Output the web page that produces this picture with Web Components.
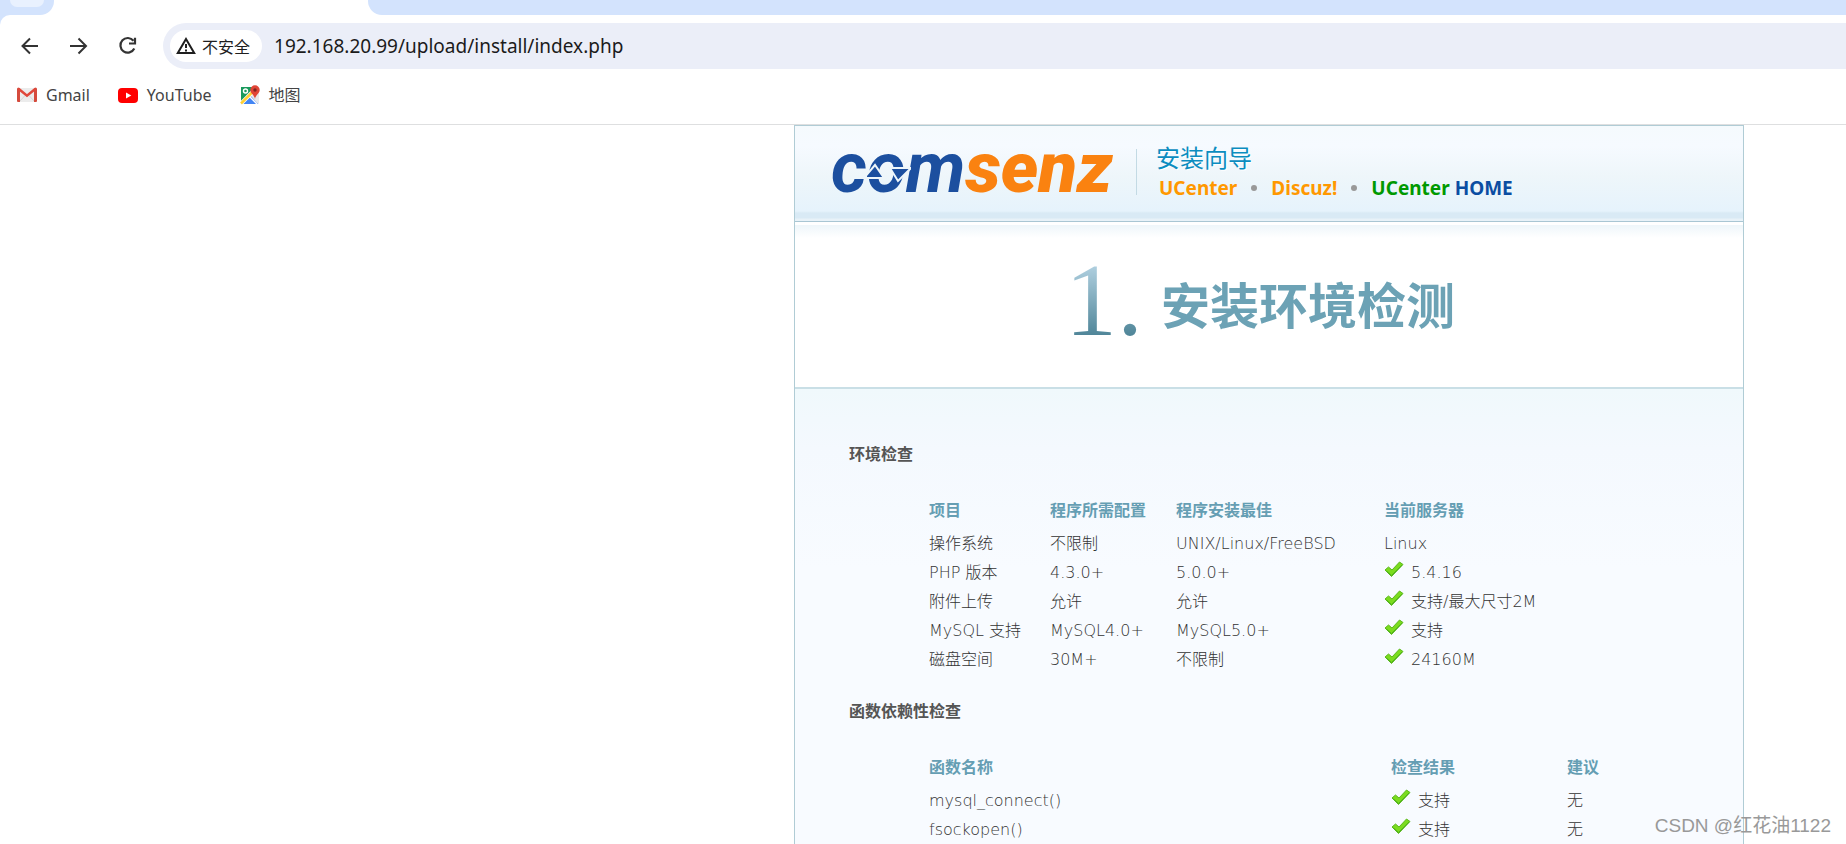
<!DOCTYPE html>
<html lang="zh-CN">
<head>
<meta charset="utf-8">
<title>Comsenz 安装向导</title>
<style>
  body {
    margin: 0;
    min-height: 100vh;
    display: flex;
    flex-direction: column;
    background: #fff;
    font-family: "Noto Sans", "Noto Sans CJK SC", sans-serif;
  }
  install-page {
    flex: 1;
  }
</style>
</head>
<body>
<browser-tabs></browser-tabs>
<browser-toolbar url="192.168.20.99/upload/install/index.php">不安全</browser-toolbar>
<bookmark-bar>
  <bookmark-item icon="gmail">Gmail</bookmark-item>
  <bookmark-item icon="youtube">YouTube</bookmark-item>
  <bookmark-item icon="maps">地图</bookmark-item>
</bookmark-bar>
<install-page>
  <install-header slot="header">安装向导</install-header>
  <step-title slot="title" step="1.">安装环境检测</step-title>
  <check-section id="env" heading="环境检查"></check-section>
  <check-section id="func" heading="函数依赖性检查"></check-section>
</install-page>
<water-mark>CSDN @红花油1122</water-mark>

<script>
class BrowserTabs extends HTMLElement {
  constructor() {
    super();
    this.attachShadow({ mode: 'open' });
    this.shadowRoot.innerHTML = `
      <style>
        :host {
          display: flex;
          flex-shrink: 0;
          height: 15px;
          background: #fff;
        }
        .left {
          width: 54px;
          background: #d3e3fd;
          border-radius: 0 0 14px 0;
          display: flex;
          justify-content: center;
        }
        .search {
          width: 34px;
          height: 7px;
          background: #e9f1fe;
          border-radius: 0 0 16px 16px;
        }
        .tab {
          width: 314px;
        }
        .rest {
          flex: 1;
          background: #d3e3fd;
          border-radius: 0 0 0 14px;
        }
      </style>
      <div class="left"><div class="search"></div></div>
      <div class="tab"></div>
      <div class="rest"></div>
    `;
  }
}

class BrowserToolbar extends HTMLElement {
  constructor() {
    super();
    this.attachShadow({ mode: 'open' });
    const url = this.getAttribute('url') || '';
    this.shadowRoot.innerHTML = `
      <style>
        :host {
          display: block;
          background: #d3e3fd;
        }
        .bar {
          display: flex;
          align-items: center;
          padding: 8px 0 0 18px;
          background: #fff;
          border-radius: 10px 0 0 0;
        }
        button {
          width: 24px;
          height: 24px;
          padding: 0;
          margin-right: 25px;
          border: none;
          background: none;
          cursor: pointer;
        }
        button:nth-of-type(3) {
          margin-right: 23px;
        }
        svg {
          display: block;
        }
        .address {
          flex: 1;
          display: flex;
          align-items: center;
          height: 46px;
          padding-left: 7px;
          background: #ebeef8;
          border-radius: 23px 0 0 23px;
        }
        .chip {
          display: flex;
          align-items: center;
          gap: 6px;
          height: 32px;
          padding: 0 12px 0 6px;
          background: #fff;
          border-radius: 16px;
          font-size: 16px;
          color: #1f1f1f;
        }
        input {
          flex: 1;
          padding: 0 12px;
          border: none;
          outline: none;
          background: none;
          font-family: "Noto Sans", sans-serif;
          font-size: 19px;
          color: #1b1b1b;
        }
      </style>
      <div class="bar">
        <button aria-label="Back"><svg width="24" height="24" fill="none" stroke="#333" stroke-width="2"><path d="M20 12H5M12 4.500L4.500 12L12 19.500"/></svg></button>
        <button aria-label="Forward"><svg width="24" height="24" fill="none" stroke="#333" stroke-width="2"><path d="M3 12H18.500M11.500 4.500L19 12L11.500 19.500"/></svg></button>
        <button aria-label="Reload"><svg width="24" height="24" fill="none" stroke="#333" stroke-width="2.200"><path d="M17.500 6.800A7.300 7.300 0 1 0 18.300 14.500M19 3.800V9.500H13"/></svg></button>
        <div class="address">
          <div class="chip">
            <svg width="20" height="18" viewBox="0 0 20 18"><path d="M10 2L18.200 16H1.800Z" fill="none" stroke="#1f1f1f" stroke-width="2"/><path d="M10 7V11M10 12.500V14.500" stroke="#1f1f1f" stroke-width="2"/></svg>
            <span><slot></slot></span>
          </div>
          <input type="text" aria-label="Address" value="${url}">
        </div>
      </div>
    `;
  }
}

class BookmarkBar extends HTMLElement {
  constructor() {
    super();
    this.attachShadow({ mode: 'open' });
    this.shadowRoot.innerHTML = `
      <style>
        :host {
          display: flex;
          flex-shrink: 0;
          align-items: center;
          gap: 28px;
          height: 52px;
          padding: 0 17px 3px;
          border-bottom: 1px solid #dedfe0;
          background: #fff;
        }
      </style>
      <slot></slot>
    `;
  }
}

const BOOKMARK_ICONS = {
  gmail: `
    <rect x="1" y="3" width="18" height="14" rx="1" fill="#ececec"/>
    <path d="M3 16L8 10.500M17 16L12 10.500" stroke="#d5d5d5"/>
    <path d="M0 4Q0 2.500 1.500 2.500L3 3.500V17H1Q0 17 0 16ZM20 4Q20 2.500 18.500 2.500L17 3.500V17H19Q20 17 20 16Z" fill="#d54b3d"/>
    <path d="M1.500 3.800L10 10.700L18.500 3.800" fill="none" stroke="#e0483b" stroke-width="2.600"/>`,
  youtube: `
    <rect x="0" y="3" width="20" height="15" rx="4" fill="#f00"/>
    <path d="M8 7.500V13.500L13.300 10.500Z" fill="#fff"/>`,
  maps: `
    <rect x="1" y="2" width="18" height="17" rx="1" fill="#e8e8e8"/>
    <path d="M1 2H12L14 7L1 19Z" fill="#1a9a5c"/>
    <path d="M1 19L10 10L18 19Z" fill="#4285f4"/>
    <path d="M1 18.500L14 5.500" stroke="#fff" stroke-width="4"/>
    <path d="M1 18.500L14 5.500" stroke="#ffcf32" stroke-width="2.500"/>
    <path d="M10 12L17 19" stroke="#fff" stroke-width="1.500"/>
    <circle cx="5.500" cy="6" r="2" fill="none" stroke="#fff" stroke-width="1.400"/>
    <path d="M15 14C14.500 10 10.300 8.500 10.300 5A4.700 4.700 0 0 1 19.700 5C19.700 8.500 15.500 10 15 14Z" fill="#e04536"/>
    <circle cx="15" cy="5" r="1.700" fill="#7d251f"/>`
};

class BookmarkItem extends HTMLElement {
  constructor() {
    super();
    this.attachShadow({ mode: 'open' });
    const icon = BOOKMARK_ICONS[this.getAttribute('icon')] || '';
    this.shadowRoot.innerHTML = `
      <style>
        :host {
          display: block;
        }
        a {
          display: flex;
          align-items: center;
          gap: 9px;
          font-size: 16px;
          line-height: 24px;
          color: #444;
          text-decoration: none;
        }
      </style>
      <a href="#"><svg width="20" height="20" viewBox="0 0 20 20">${icon}</svg><slot></slot></a>
    `;
  }
}

class InstallPage extends HTMLElement {
  constructor() {
    super();
    this.attachShadow({ mode: 'open' });
    this.shadowRoot.innerHTML = `
      <style>
        :host {
          display: flex;
          justify-content: flex-end;
          padding-right: 102px;
        }
        main {
          box-sizing: border-box;
          width: 950px;
          border: 1px solid #b0ccd5;
          border-bottom: none;
          background: #f8fbff;
        }
        .body {
          display: flex;
          flex-direction: column;
          gap: 26px;
          padding: 54px 54px 0;
          background: linear-gradient(#f0f9fc, #f4f9fe 60px, #f8fbff 180px);
        }
      </style>
      <main>
        <slot name="header"></slot>
        <slot name="title"></slot>
        <div class="body"><slot></slot></div>
      </main>
    `;
  }
}

class InstallHeader extends HTMLElement {
  constructor() {
    super();
    this.attachShadow({ mode: 'open' });
    this.shadowRoot.innerHTML = `
      <style>
        :host {
          display: flex;
          align-items: center;
          box-sizing: border-box;
          height: 96px;
          padding: 0 36px 4px;
          border-bottom: 1px solid #a9c6d3;
          background: linear-gradient(#f5fafd, #f6faff 20px, #eef6fa 50px, #e6f3fc 85px, #d9eaf5 87px, #d9eaf5 92px, #e8f2f8 93px);
        }
        .logo {
          display: flex;
          width: 305px;
          height: 46px;
          align-items: flex-end;
          font: italic bold 71px/54px Roboto, sans-serif;
          color: #1c4f9f;
          border-right: 1px solid #c3dae4;
        }
        .logo b {
          color: #fa8210;
        }
        .o {
          position: relative;
        }
        .o svg {
          position: absolute;
          left: 0;
          top: 12px;
        }
        .names {
          padding-left: 19px;
        }
        h1 {
          margin: 0;
          font-size: 24px;
          line-height: 32px;
          font-weight: 400;
          color: #0b8dc0;
          text-shadow: 1px 1px 1px #fff;
        }
        ul {
          display: flex;
          align-items: center;
          gap: 14px;
          margin: 0;
          padding: 0 0 0 3px;
          list-style: none;
          font: bold 19px/28px "Noto Sans", sans-serif;
          color: #ff9800;
        }
        .dot {
          width: 6px;
          height: 6px;
          border-radius: 3px;
          background: #999;
        }
        .green {
          color: #090;
        }
        .blue {
          color: #0b4da2;
        }
      </style>
      <div class="logo"><span>c</span><span class="o">o<svg width="44" height="40" viewBox="0 0 44 40">
        <path d="M-3 25L8 12L17 25Z" fill="#1c4f9f" stroke="#eef6fa" stroke-width="2"/>
        <path d="M23 15H44L31 28Z" fill="#1c4f9f" stroke="#eef6fa" stroke-width="2"/>
      </svg></span><span>m</span><b>senz</b></div>
      <div class="names">
        <h1><slot></slot></h1>
        <ul>
          <li>UCenter</li>
          <li class="dot"></li>
          <li>Discuz!</li>
          <li class="dot"></li>
          <li class="green">UCenter <span class="blue">HOME</span></li>
        </ul>
      </div>
    `;
  }
}

class StepTitle extends HTMLElement {
  constructor() {
    super();
    this.attachShadow({ mode: 'open' });
    const step = this.getAttribute('step') || '';
    this.shadowRoot.innerHTML = `
      <style>
        :host {
          display: flex;
          justify-content: center;
          align-items: center;
          gap: 18px;
          box-sizing: border-box;
          height: 167px;
          padding-right: 18px;
          border-bottom: 2px solid #c9dfe6;
          background: linear-gradient(#fff 3px, #eef6fa 3px, #fff 16px);
        }
        .step {
          padding-bottom: 10px;
          font: 104px/120px "Liberation Serif", serif;
          background: linear-gradient(#b0d0e0 25px, #4f8598 96px);
          -webkit-background-clip: text;
          background-clip: text;
          color: transparent;
        }
        h2 {
          margin: 0;
          font-size: 49px;
          line-height: 60px;
          font-weight: 700;
          color: #6ca2b5;
        }
      </style>
      <span class="step">${step}</span>
      <h2><slot></slot></h2>
    `;
  }
}

class CheckSection extends HTMLElement {
  constructor() {
    super();
    this.attachShadow({ mode: 'open' });
  }

  // data: { columns: [{ name, width }], rows: [[text, ...]] }, a leading "+" marks a passed check
  set data(data) {
    const cols = data.columns.map((c) => `<col${c.width ? ` style="width: ${c.width}px"` : ''}>`).join('');
    const head = data.columns.map((c) => `<th scope="col">${c.name}</th>`).join('');
    const cell = (text) => text.startsWith('+') ? `<td><pass-mark></pass-mark>${text.slice(1)}</td>` : `<td>${text}</td>`;
    const rows = data.rows.map((row) => `<tr>${row.map(cell).join('')}</tr>`).join('');

    this.shadowRoot.innerHTML = `
      <style>
        :host {
          display: block;
          font-family: "DejaVu Sans", "Noto Sans CJK SC", sans-serif;
          font-size: 16px;
          color: #555;
        }
        h3 {
          margin: 0 0 26px;
          font-size: 16px;
          line-height: 24px;
        }
        .table {
          padding-left: 80px;
        }
        table {
          width: 100%;
          table-layout: fixed;
          border-collapse: collapse;
        }
        th, td {
          height: 29px;
          padding: 0;
          line-height: 24px;
          text-align: left;
          white-space: nowrap;
        }
        th {
          height: 36px;
          color: #659eb3;
        }
        td {
          font-weight: 200;
          color: #333;
        }
      </style>
      <h3>${this.getAttribute('heading')}</h3>
      <div class="table">
        <table>
          <colgroup>${cols}</colgroup>
          <thead><tr>${head}</tr></thead>
          <tbody>${rows}</tbody>
        </table>
      </div>
    `;
  }
}

class PassMark extends HTMLElement {
  constructor() {
    super();
    this.attachShadow({ mode: 'open' });
    this.shadowRoot.innerHTML = `
      <style>
        :host {
          display: inline-block;
          width: 20px;
          height: 17px;
          margin-right: 7px;
        }
      </style>
      <svg width="20" height="17" viewBox="0 0 20 17">
        <path d="M1 9L4.500 6L8 9L15.500 1L19 3.500L7.500 15.500Z" fill="#7bdc1e" stroke="#5cb81e"/>
        <path d="M2.500 10L7.500 14.500L18 4" fill="none" stroke="#4cb01c"/>
      </svg>
    `;
  }
}

class WaterMark extends HTMLElement {
  constructor() {
    super();
    this.attachShadow({ mode: 'open' });
    this.shadowRoot.innerHTML = `
      <style>
        :host {
          position: absolute;
          right: 15px;
          bottom: 6px;
          font: 19px/24px "Liberation Sans", "Noto Sans CJK SC", sans-serif;
          color: #999;
        }
      </style>
      <slot></slot>
    `;
  }
}

customElements.define('browser-tabs', BrowserTabs);
customElements.define('browser-toolbar', BrowserToolbar);
customElements.define('bookmark-bar', BookmarkBar);
customElements.define('bookmark-item', BookmarkItem);
customElements.define('install-page', InstallPage);
customElements.define('install-header', InstallHeader);
customElements.define('step-title', StepTitle);
customElements.define('check-section', CheckSection);
customElements.define('pass-mark', PassMark);
customElements.define('water-mark', WaterMark);

document.getElementById('env').data = {
  columns: [
    { name: '项目', width: 121 },
    { name: '程序所需配置', width: 126 },
    { name: '程序安装最佳', width: 208 },
    { name: '当前服务器' }
  ],
  rows: [
    ['操作系统', '不限制', 'UNIX/Linux/FreeBSD', 'Linux'],
    ['PHP 版本', '4.3.0+', '5.0.0+', '+5.4.16'],
    ['附件上传', '允许', '允许', '+支持/最大尺寸2M'],
    ['MySQL 支持', 'MySQL4.0+', 'MySQL5.0+', '+支持'],
    ['磁盘空间', '30M+', '不限制', '+24160M']
  ]
};

document.getElementById('func').data = {
  columns: [
    { name: '函数名称', width: 462 },
    { name: '检查结果', width: 176 },
    { name: '建议' }
  ],
  rows: [
    ['mysql_connect()', '+支持', '无'],
    ['fsockopen()', '+支持', '无']
  ]
};
</script>
</body>
</html>
